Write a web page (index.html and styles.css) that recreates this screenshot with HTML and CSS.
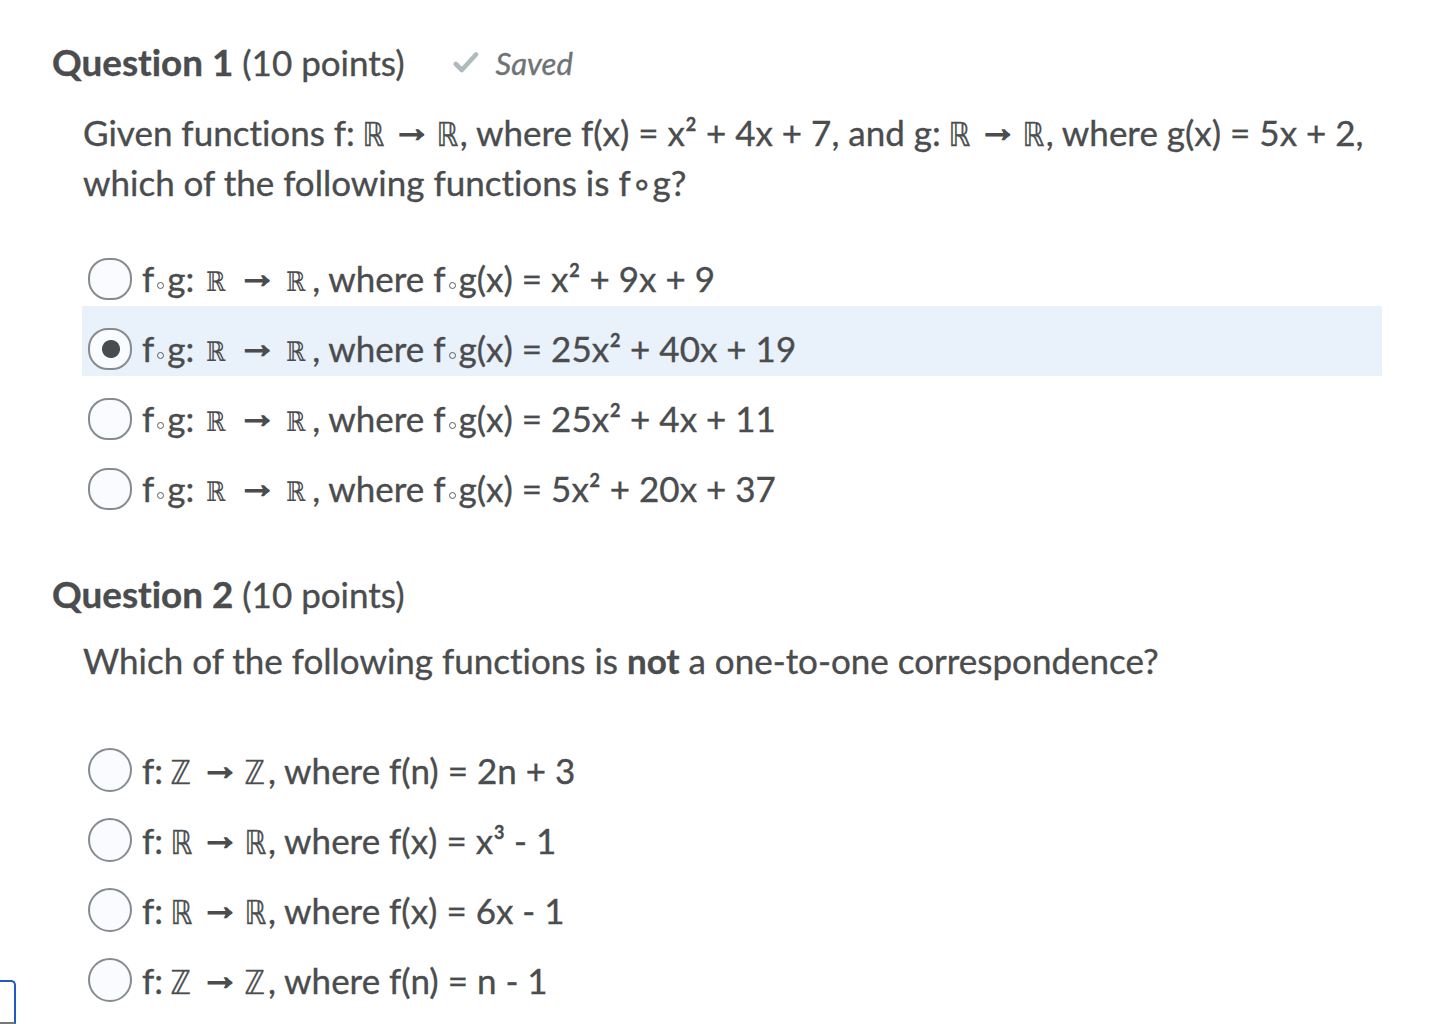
FILE: index.html
```html
<!DOCTYPE html>
<html lang="en">
<head>
  <meta charset="UTF-8">
  <title>Quiz</title>
  <link rel="stylesheet" href="styles.css">
</head>
<body>
  <div class="quiz">
    <div class="question">
      <div class="question-header">
        <h2><strong>Question 1</strong> (10 points)</h2>
        <svg class="check" width="26" height="24" viewBox="0 0 26 24"><path d="M2.8 13 L8.8 19 L23 3.5" fill="none" stroke="#b1bbbe" stroke-width="4.6" stroke-linecap="round" stroke-linejoin="round"/></svg>
        <span class="saved">Saved</span>
      </div>
      <p class="question-text">Given functions f: <span class="bb">ℝ</span> <span class="arrow">→</span> <span class="bb">ℝ</span>, where f(x) = x<sup>2</sup> + 4x + 7, and g: <span class="bb">ℝ</span> <span class="arrow">→</span> <span class="bb">ℝ</span>, where g(x) = 5x + 2,<br>which of the following functions is f<span class="ring">∘</span>g?</p>
      <div class="answers">
        <label class="answer"><input type="radio" name="q1"><span>f<i class="dot"></i>g: <span class="bb small">ℝ</span> <span class="arrow">→</span> <span class="bb small">ℝ</span>, where f<i class="dot"></i>g(x) = x<sup>2</sup> + 9x + 9</span></label>
        <label class="answer selected"><input type="radio" name="q1" checked><span>f<i class="dot"></i>g: <span class="bb small">ℝ</span> <span class="arrow">→</span> <span class="bb small">ℝ</span>, where f<i class="dot"></i>g(x) = 25x<sup>2</sup> + 40x + 19</span></label>
        <label class="answer"><input type="radio" name="q1"><span>f<i class="dot"></i>g: <span class="bb small">ℝ</span> <span class="arrow">→</span> <span class="bb small">ℝ</span>, where f<i class="dot"></i>g(x) = 25x<sup>2</sup> + 4x + 11</span></label>
        <label class="answer"><input type="radio" name="q1"><span>f<i class="dot"></i>g: <span class="bb small">ℝ</span> <span class="arrow">→</span> <span class="bb small">ℝ</span>, where f<i class="dot"></i>g(x) = 5x<sup>2</sup> + 20x + 37</span></label>
      </div>
    </div>
    <div class="question second">
      <div class="question-header">
        <h2><strong>Question 2</strong> (10 points)</h2>
      </div>
      <p class="question-text">Which of the following functions is <strong>not</strong> a one-to-one correspondence?</p>
      <div class="answers">
        <label class="answer"><input type="radio" name="q2"><span>f: <span class="bb">ℤ</span> <span class="arrow">→</span> <span class="bb">ℤ</span>, where f(n) = 2n + 3</span></label>
        <label class="answer"><input type="radio" name="q2"><span>f: <span class="bb">ℝ</span> <span class="arrow">→</span> <span class="bb">ℝ</span>, where f(x) = x<sup>3</sup> - 1</span></label>
        <label class="answer"><input type="radio" name="q2"><span>f: <span class="bb">ℝ</span> <span class="arrow">→</span> <span class="bb">ℝ</span>, where f(x) = 6x - 1</span></label>
        <label class="answer"><input type="radio" name="q2"><span>f: <span class="bb">ℤ</span> <span class="arrow">→</span> <span class="bb">ℤ</span>, where f(n) = n - 1</span></label>
      </div>
    </div>
  </div>
  <div class="corner"></div>
</body>
</html>
```
FILE: styles.css
```css
body {
  margin: 0;
  height: 1024px;
  overflow: hidden;
  position: relative;
  background: #fff;
  color: #4a4c4e;
  font-family: Lato, "DejaVu Sans", sans-serif;
  font-size: 35px;
  line-height: 50px;
  font-variant-ligatures: none;
  -webkit-text-stroke: 0.35px currentColor;
}
.quiz {
  padding: 37px 72px 0 52px;
}
.question-header {
  display: flex;
  align-items: center;
  height: 50px;
}
h2 {
  margin: 0;
  font-size: 35px;
  font-weight: 400;
}
h2 strong {
  font-size: 36.8px;
}
.check {
  margin: 2px 17px 0 48px;
}
.saved {
  margin-top: 2px;
  font-size: 31px;
  font-style: italic;
  color: #6e7376;
}
.question-text {
  margin: 20px 0 0 31px;
  white-space: nowrap;
}
.answers {
  margin: 29px 0 0 30px;
}
.answer {
  display: flex;
  align-items: center;
  height: 70px;
  padding-left: 6px;
  box-sizing: border-box;
  white-space: nowrap;
}
.answer.selected {
  background: #e9f1fb;
}
input {
  appearance: none;
  box-sizing: border-box;
  width: 44px;
  height: 42px;
  margin: 16px 10px 0 0;
  border: 2px solid #868b8f;
  border-radius: 20px;
  background: #f9fbff;
}
input:checked {
  background: radial-gradient(circle at 21px 19px, #494c4e 8.5px, #f9fbff 9.5px);
}
.answer > span {
  margin-top: 14px;
}
sup {
  display: inline-block;
  width: 12px;
  text-align: center;
  font-size: 18px;
  font-weight: 700;
  line-height: 0;
  vertical-align: 15px;
}
.bb {
  display: inline-block;
  width: 22px;
  font-family: "DejaVu Sans", sans-serif;
  font-size: 33px;
  line-height: 0;
  transform: translateX(-1.5px) scaleX(0.83);
  transform-origin: left;
}
.bb.small {
  width: 28px;
  font-family: "DejaVu Serif", serif;
  font-size: 27px;
  text-align: center;
  vertical-align: 1px;
  transform: translateX(-1px) scaleX(0.86);
  transform-origin: center;
  -webkit-text-stroke: 0;
}
.arrow + .small {
  margin-right: 1px;
}
.arrow {
  display: inline-flex;
  justify-content: center;
  width: 34px;
  font-family: "Liberation Sans", sans-serif;
  font-size: 39px;
  line-height: 0;
  vertical-align: 5px;
  -webkit-text-stroke: 1.7px currentColor;
}
.dot {
  display: inline-block;
  width: 7px;
  height: 7px;
  margin: 0 3px 3px;
  box-sizing: border-box;
  border: 1.5px solid #5a5c5e;
  border-radius: 50%;
}
.second {
  margin-top: 53px;
}
.second .question-text {
  margin-top: 16px;
}
.second .answers {
  margin-top: 42px;
}
.second input {
  height: 44px;
  border-radius: 50%;
}
.second .answer > span {
  margin-top: 16px;
}
.corner {
  position: absolute;
  left: -10px;
  top: 980px;
  width: 22px;
  height: 40px;
  border: 2px solid #1f5ac6;
  border-bottom-color: #777;
  border-radius: 5px 5px 0 0;
}
```
